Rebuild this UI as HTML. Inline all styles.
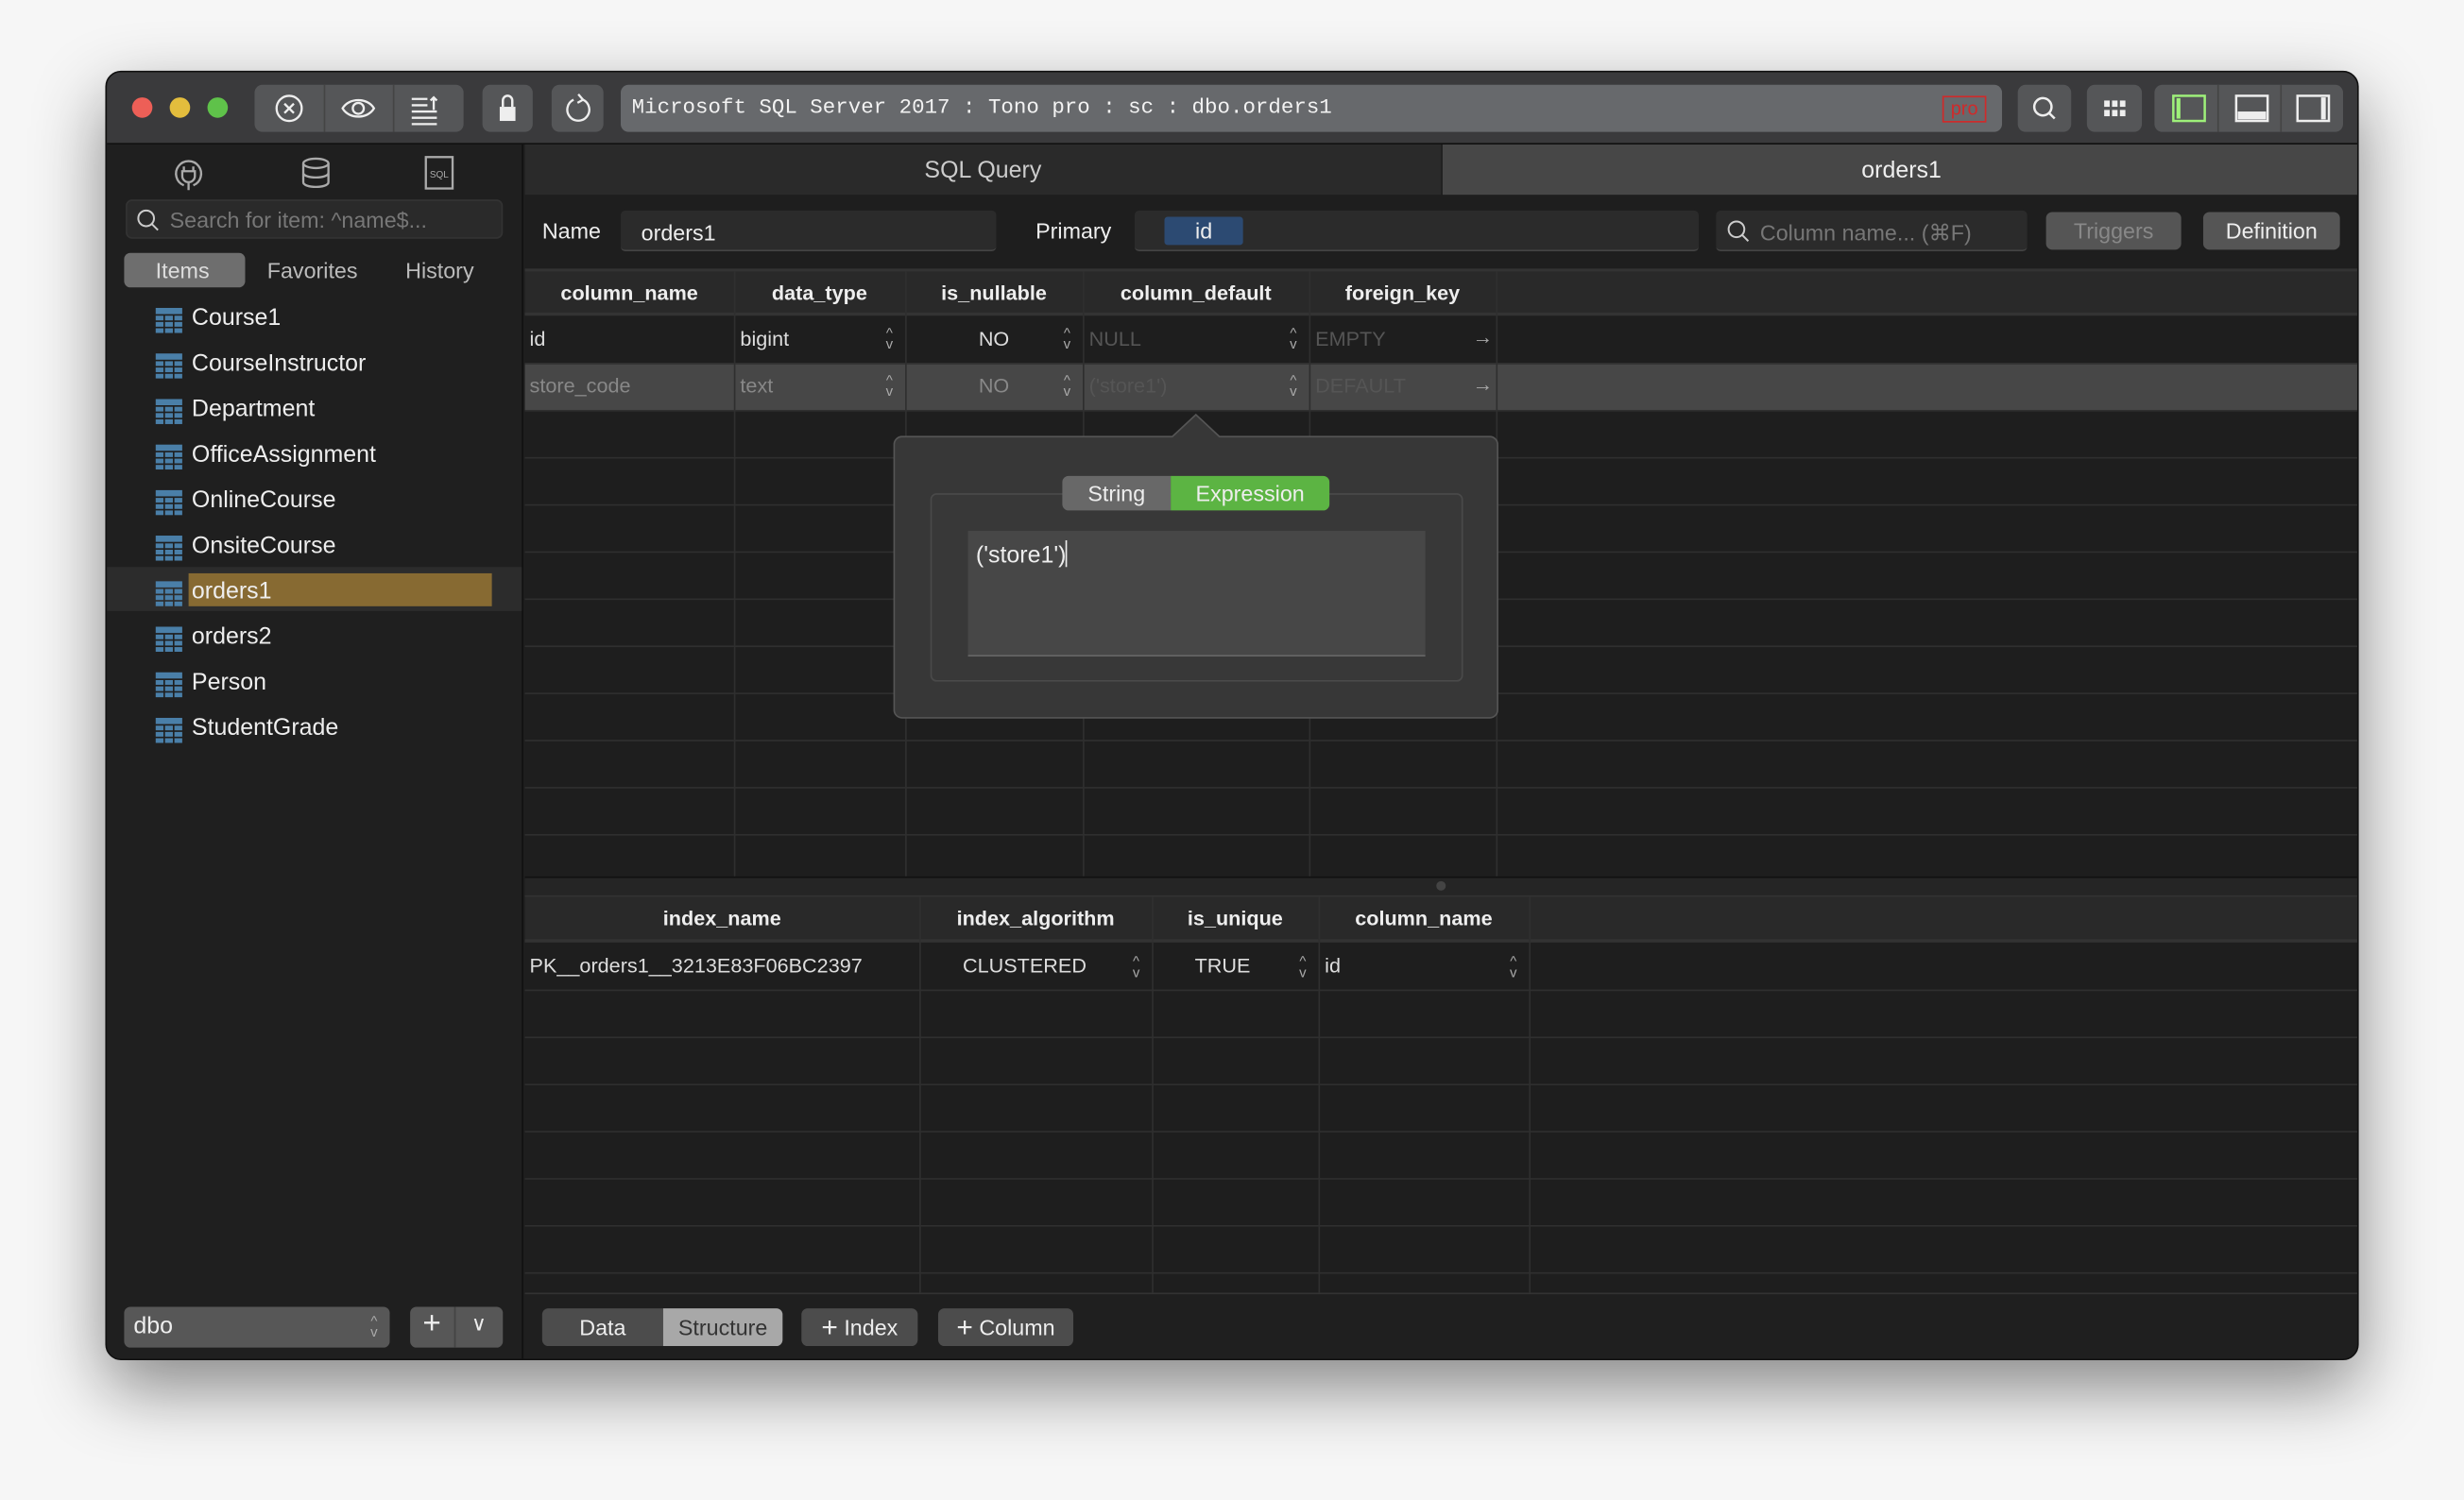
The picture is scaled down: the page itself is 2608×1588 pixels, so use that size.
<!DOCTYPE html>
<html><head><meta charset="utf-8"><style>
html,body{margin:0;padding:0;width:2608px;height:1588px;overflow:hidden;background:#fff}
#s{position:absolute;left:0;top:0;width:1568px;height:955px;transform:scale(1.6633,1.6628);transform-origin:0 0;font-family:"Liberation Sans",sans-serif;color:#ddd;background:#f6f6f6}
.a{position:absolute;box-sizing:border-box}
.win{left:67px;top:45px;width:1434px;height:821px;border-radius:10px;background:#1e1e1e;overflow:hidden;box-shadow:0 18px 45px rgba(0,0,0,.45);border:1px solid #111}
.btn{background:#555658;border-radius:5px;height:30px;top:8px}
.t{font-size:14px;white-space:nowrap}
.hd{font-size:13px;font-weight:bold;color:#eee;text-align:center}
.cell{font-size:13px;color:#ddd;white-space:nowrap}
.ud{font-size:9px;line-height:7px;color:#aaa;text-align:center;width:8px}
</style></head><body><div id="s">
<div class="a win">
 <div class="a" style="left:0;top:0;width:1434px;height:46px;background:#3a3a3c;border-bottom:1px solid #111"></div>
 <div class="a" style="left:16px;top:16px;width:13px;height:13px;border-radius:50%;background:#ed5f57"></div>
 <div class="a" style="left:40px;top:16px;width:13px;height:13px;border-radius:50%;background:#e3bd3d"></div>
 <div class="a" style="left:64px;top:16px;width:13px;height:13px;border-radius:50%;background:#5fc24a"></div>
 <div class="a btn" style="left:94px;width:133px"></div>
 <div class="a" style="left:138px;top:8px;width:1px;height:30px;background:#444"></div>
 <div class="a" style="left:182px;top:8px;width:1px;height:30px;background:#444"></div>
 <svg class="a" style="left:94px;top:8px" width="133" height="30"><g stroke="#eee" stroke-width="1.4" fill="none"><circle cx="22" cy="15" r="8"/><path d="M19 12l6 6M25 12l-6 6"/><path d="M56 15c4-7 16-7 20 0c-4 7-16 7-20 0z"/><circle cx="66" cy="15" r="3.5"/><path d="M100 9h10M100 13h10M100 17h16M100 21h16M100 25h16M114 8v8M112 10l2-2 2 2"/></g></svg>
 <div class="a btn" style="left:239px;width:32px"></div>
 <svg class="a" style="left:239px;top:8px" width="32" height="30"><rect x="11" y="14" width="10" height="9" fill="#eee"/><path d="M13 14v-4a3 3 0 0 1 6 0v4" stroke="#eee" stroke-width="1.5" fill="none"/></svg>
 <div class="a btn" style="left:283px;width:33px"></div>
 <svg class="a" style="left:283px;top:8px" width="33" height="30"><path d="M20 9.5a7 7 0 1 1-6 0" stroke="#eee" stroke-width="1.4" fill="none"/><path d="M17 6l3 3.5-3.5 2" stroke="#eee" stroke-width="1.4" fill="none"/></svg>
 <div class="a" style="left:327px;top:8px;width:879px;height:30px;border-radius:5px;background:#67696c"></div>
 <div class="a" style="left:334px;top:16px;font-family:'Liberation Mono',monospace;font-size:13.5px;color:#f2f2f2;white-space:nowrap">Microsoft SQL Server 2017 : Tono pro : sc : dbo.orders1</div>
 <div class="a" style="left:1168px;top:15px;width:28px;height:17px;border:1px solid #d02a2a;color:#d02a2a;font-size:12px;text-align:center;line-height:15px">pro</div>
 <div class="a btn" style="left:1216px;width:34px"></div>
 <svg class="a" style="left:1216px;top:8px" width="34" height="30"><circle cx="16" cy="14" r="5.5" stroke="#eee" stroke-width="1.5" fill="none"/><path d="M20 18l3.5 3.5" stroke="#eee" stroke-width="1.5"/></svg>
 <div class="a btn" style="left:1260px;width:35px"></div>
 <svg class="a" style="left:1260px;top:8px" width="35" height="30"><g fill="#eee"><rect x="11" y="10" width="3.5" height="4"/><rect x="16" y="10" width="3.5" height="4"/><rect x="21" y="10" width="3.5" height="4"/><rect x="11" y="16" width="3.5" height="4"/><rect x="16" y="16" width="3.5" height="4"/><rect x="21" y="16" width="3.5" height="4"/></g></svg>
 <div class="a btn" style="left:1303px;width:120px"></div>
 <div class="a" style="left:1343px;top:8px;width:1px;height:30px;background:#444"></div>
 <div class="a" style="left:1383px;top:8px;width:1px;height:30px;background:#444"></div>
 <svg class="a" style="left:1303px;top:8px" width="120" height="30"><rect x="12" y="7" width="20" height="16" stroke="#9ef07a" stroke-width="1.5" fill="none"/><rect x="14" y="8.5" width="2.5" height="13" fill="#9ef07a"/><rect x="52" y="7" width="20" height="16" stroke="#eee" stroke-width="1.5" fill="none"/><rect x="53" y="17" width="18" height="5" fill="#eee"/><rect x="91" y="7" width="20" height="16" stroke="#eee" stroke-width="1.5" fill="none"/><rect x="106" y="8" width="3" height="14" fill="#eee"/></svg>

 <div class="a" style="left:0;top:46px;width:265px;height:775px;background:#1f1f1f;border-right:1px solid #111"></div>
 <svg class="a" style="left:30px;top:50px" width="200" height="28"><g stroke="#aaa" stroke-width="1.4" fill="none"><path d="M19 22a8 8 0 1 1 6 0"/><path d="M19 10v3M25 10v3M18 13h8v3a4 4 0 0 1-8 0z M22 20v5"/><ellipse cx="103" cy="8" rx="8" ry="3"/><path d="M95 8v12c0 4 16 4 16 0V8M95 14c0 4 16 4 16 0"/><rect x="173" y="4" width="17" height="20"/></g><text x="175.5" y="17" font-size="6" fill="#aaa" font-family="Liberation Sans">SQL</text></svg>
 <div class="a" style="left:12px;top:81px;width:240px;height:25px;border-radius:4px;background:#2a2a2a;border:1px solid #333"></div>
 <svg class="a" style="left:18px;top:86px" width="16" height="16"><circle cx="7" cy="7" r="5" stroke="#ccc" stroke-width="1.2" fill="none"/><path d="M10.5 10.5l4 4" stroke="#ccc" stroke-width="1.2"/></svg>
 <div class="a t" style="left:40px;top:86px;color:#777;font-size:14px">Search for item: ^name$...</div>
 <div class="a" style="left:11px;top:115px;width:77px;height:22px;border-radius:4px;background:#6e6e6e"></div>
 <div class="a t" style="left:31px;top:118px;color:#ddd">Items</div>
 <div class="a t" style="left:102px;top:118px;color:#bbb">Favorites</div>
 <div class="a t" style="left:190px;top:118px;color:#bbb">History</div>
 <div class="a" style="left:0;top:315px;width:264px;height:28px;background:#2c2c2c"></div>
 <div class="a" style="left:52px;top:319px;width:193px;height:21px;background:#876a32"></div>
 <div id="list"></div>
 <div class="a" style="left:11px;top:786px;width:169px;height:26px;border-radius:4px;background:#575757"></div>
 <div class="a t" style="left:17px;top:790px;font-size:15px;color:#eee">dbo</div>
 <div class="a ud" style="left:166px;top:792px">^<br>v</div>
 <div class="a" style="left:193px;top:786px;width:59px;height:26px;border-radius:4px;background:#575757"></div>
 <div class="a" style="left:221px;top:786px;width:1px;height:26px;background:#444"></div>
 <div class="a t" style="left:201px;top:786px;font-size:20px;color:#eee">+</div>
 <div class="a t" style="left:232px;top:789px;font-size:13px;color:#eee">&#8744;</div>

 <div class="a" style="left:266px;top:46px;width:583px;height:32px;background:#2a2a2a"></div>
 <div class="a" style="left:850px;top:46px;width:584px;height:32px;background:#474747"></div>
 <div class="a t" style="left:266px;top:54px;width:583px;text-align:center;color:#ccc;font-size:15px">SQL Query</div>
 <div class="a t" style="left:850px;top:54px;width:584px;text-align:center;color:#eee;font-size:15px">orders1</div>
 <div class="a t" style="left:277px;top:93px;color:#eee">Name</div>
 <div class="a" style="left:327px;top:88px;width:239px;height:26px;background:#2b2b2b;border-radius:3px;border-bottom:1px solid #444"></div>
 <div class="a t" style="left:340px;top:94px;color:#eee">orders1</div>
 <div class="a t" style="left:591px;top:93px;color:#eee">Primary</div>
 <div class="a" style="left:654px;top:88px;width:359px;height:26px;background:#2b2b2b;border-radius:3px;border-bottom:1px solid #444"></div>
 <div class="a" style="left:673px;top:92px;width:50px;height:18px;background:#2c4a72;border-radius:2px;color:#eee;font-size:14px;text-align:center;line-height:18px">id</div>
 <div class="a" style="left:1024px;top:88px;width:198px;height:26px;background:#2b2b2b;border-radius:3px;border-bottom:1px solid #444"></div>
 <svg class="a" style="left:1030px;top:93px" width="16" height="16"><circle cx="7" cy="7" r="5" stroke="#ccc" stroke-width="1.2" fill="none"/><path d="M10.5 10.5l4 4" stroke="#ccc" stroke-width="1.2"/></svg>
 <div class="a t" style="left:1052px;top:94px;color:#777">Column name... (&#8984;F)</div>
 <div class="a" style="left:1234px;top:89px;width:86px;height:24px;border-radius:4px;background:#555;color:#888;font-size:14px;text-align:center;line-height:24px">Triggers</div>
 <div class="a" style="left:1334px;top:89px;width:87px;height:24px;border-radius:4px;background:#555;color:#eee;font-size:14px;text-align:center;line-height:24px">Definition</div>

 <div class="a" style="left:266px;top:125px;width:1168px;height:2px;background:#333"></div>
 <div class="a" style="left:266px;top:127px;width:1168px;height:28px;background:#292929;border-bottom:2px solid #333"></div>
 <div class="a" style="left:266px;top:185px;width:1168px;height:30px;background:#474747"></div>
 <div id="g1"></div>
 <div class="a hd" style="left:266px;top:133px;width:133px">column_name</div>
 <div class="a hd" style="left:399px;top:133px;width:109px">data_type</div>
 <div class="a hd" style="left:508px;top:133px;width:113px">is_nullable</div>
 <div class="a hd" style="left:621px;top:133px;width:144px">column_default</div>
 <div class="a hd" style="left:765px;top:133px;width:119px">foreign_key</div>
 <div class="a cell" style="left:269px;top:162px">id</div>
 <div class="a cell" style="left:403px;top:162px">bigint</div>
 <div class="a cell" style="left:508px;top:162px;width:113px;text-align:center">NO</div>
 <div class="a cell" style="left:625px;top:162px;color:#555">NULL</div>
 <div class="a cell" style="left:769px;top:162px;color:#555">EMPTY</div>
 <div class="a cell" style="left:869px;top:161px;color:#aaa">&#8594;</div>
 <div class="a cell" style="left:269px;top:192px;color:#888">store_code</div>
 <div class="a cell" style="left:403px;top:192px;color:#888">text</div>
 <div class="a cell" style="left:508px;top:192px;width:113px;text-align:center;color:#888">NO</div>
 <div class="a cell" style="left:625px;top:192px;color:#555">('store1')</div>
 <div class="a cell" style="left:769px;top:192px;color:#555">DEFAULT</div>
 <div class="a cell" style="left:869px;top:191px;color:#aaa">&#8594;</div>
 <div class="a ud" style="left:494px;top:163px">^<br>v</div><div class="a ud" style="left:607px;top:163px">^<br>v</div><div class="a ud" style="left:751px;top:163px">^<br>v</div>
 <div class="a ud" style="left:494px;top:193px">^<br>v</div><div class="a ud" style="left:607px;top:193px">^<br>v</div><div class="a ud" style="left:751px;top:193px">^<br>v</div>

 <div class="a" style="left:266px;top:512px;width:1168px;height:13px;background:#252525;border-top:1px solid #111;border-bottom:1px solid #333"></div>
 <div class="a" style="left:846px;top:515px;width:6px;height:6px;border-radius:50%;background:#444"></div>

 <div class="a" style="left:266px;top:525px;width:1168px;height:29px;background:#292929;border-bottom:2px solid #333"></div>
 <div id="g2"></div>
 <div class="a hd" style="left:266px;top:531px;width:251px">index_name</div>
 <div class="a hd" style="left:517px;top:531px;width:148px">index_algorithm</div>
 <div class="a hd" style="left:665px;top:531px;width:106px">is_unique</div>
 <div class="a hd" style="left:771px;top:531px;width:134px">column_name</div>
 <div class="a cell" style="left:269px;top:561px">PK__orders1__3213E83F06BC2397</div>
 <div class="a cell" style="left:517px;top:561px;width:134px;text-align:center">CLUSTERED</div>
 <div class="a cell" style="left:665px;top:561px;width:90px;text-align:center">TRUE</div>
 <div class="a cell" style="left:775px;top:561px">id</div>
 <div class="a ud" style="left:651px;top:563px">^<br>v</div><div class="a ud" style="left:757px;top:563px">^<br>v</div><div class="a ud" style="left:891px;top:563px">^<br>v</div>

 <div class="a" style="left:266px;top:777px;width:1168px;height:44px;background:#1f1f1f;border-top:1px solid #333"></div>
 <div class="a" style="left:277px;top:787px;width:77px;height:24px;border-radius:4px 0 0 4px;background:#4c4c4c;color:#eee;font-size:14px;text-align:center;line-height:24px">Data</div>
 <div class="a" style="left:354px;top:787px;width:76px;height:24px;border-radius:0 4px 4px 0;background:#a8a8a8;color:#333;font-size:14px;text-align:center;line-height:24px">Structure</div>
 <div class="a" style="left:442px;top:787px;width:74px;height:24px;border-radius:4px;background:#4c4c4c;color:#eee;font-size:14px;text-align:center;line-height:24px"><span style="font-size:18px;vertical-align:-1px">+</span> Index</div>
 <div class="a" style="left:529px;top:787px;width:86px;height:24px;border-radius:4px;background:#4c4c4c;color:#eee;font-size:14px;text-align:center;line-height:24px"><span style="font-size:18px;vertical-align:-1px">+</span> Column</div>

 <svg class="a" style="left:500px;top:216px" width="387" height="196"><path d="M6 16H178l15-14 15 14H380a5 5 0 0 1 5 5V190a5 5 0 0 1-5 5H6a5 5 0 0 1-5-5V21a5 5 0 0 1 5-5z" fill="#373737" stroke="#555" stroke-width="1"/></svg>
 <div class="a" style="left:524px;top:268px;width:339px;height:120px;border:1px solid #4a4a4a;border-radius:4px;background:#383838"></div>
 <div class="a" style="left:608px;top:257px;width:69px;height:22px;border-radius:4px 0 0 4px;background:#686868;color:#eee;font-size:14px;text-align:center;line-height:22px">String</div>
 <div class="a" style="left:677px;top:257px;width:101px;height:22px;border-radius:0 4px 4px 0;background:#5cb443;color:#eee;font-size:14px;text-align:center;line-height:22px">Expression</div>
 <div class="a" style="left:548px;top:292px;width:291px;height:80px;background:#474747;border-bottom:1px solid #666"></div>
 <div class="a t" style="left:553px;top:298px;color:#eee;font-size:15px">('store1')<span style="display:inline-block;width:1px;height:17px;background:#eee;vertical-align:-3px"></span></div>
</div>
</div>
<script>
var n=["Course1","CourseInstructor","Department","OfficeAssignment","OnlineCourse","OnsiteCourse","orders1","orders2","Person","StudentGrade"],h="";
n.forEach(function(x,i){var y=148+i*29;h+='<svg class="a" style="left:31px;top:'+(y+2)+'px" width="17" height="16"><rect width="17" height="4" fill="#4a7fa8"/><g fill="#4a7fa8"><rect y="5" width="5" height="3"/><rect x="6" y="5" width="5" height="3"/><rect x="12" y="5" width="5" height="3"/><rect y="9" width="5" height="3"/><rect x="6" y="9" width="5" height="3"/><rect x="12" y="9" width="5" height="3"/><rect y="13" width="5" height="3"/><rect x="6" y="13" width="5" height="3"/><rect x="12" y="13" width="5" height="3"/></g></svg><div class="a t" style="left:54px;top:'+y+'px;font-size:15px;color:#eee">'+x+'</div>';});
document.getElementById("list").outerHTML=h;
var g="";[399,508,621,765,884].forEach(function(x){g+='<div class="a" style="left:'+x+'px;top:127px;width:1px;height:385px;background:#2f2f2f"></div>';});
for(var y=185;y<512;y+=30)g+='<div class="a" style="left:266px;top:'+y+'px;width:1168px;height:1px;background:#2f2f2f"></div>';
document.getElementById("g1").outerHTML=g;
g="";[517,665,771,905].forEach(function(x){g+='<div class="a" style="left:'+x+'px;top:525px;width:1px;height:252px;background:#2f2f2f"></div>';});
for(var y=584;y<777;y+=30)g+='<div class="a" style="left:266px;top:'+y+'px;width:1168px;height:1px;background:#2f2f2f"></div>';
document.getElementById("g2").outerHTML=g;
</script>
</body></html>
